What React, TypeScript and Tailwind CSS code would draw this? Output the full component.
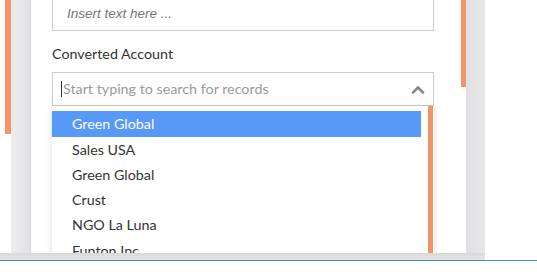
import { ChevronUp } from "lucide-react";

const records = ["Green Global", "Sales USA", "Green Global", "Crust", "NGO La Luna", "Funton Inc"];

export default function App() {
  return (
    <div className="w-[537px] h-[276px] bg-white flex flex-col overflow-hidden font-['Lato','Open_Sans',sans-serif]">
      <div className="flex h-[260px]">
        <div className="w-[485px] flex flex-col">
          <div className="flex flex-1 min-h-0">
            {/* page scrollbar */}
            <div className="w-[11px] bg-white pl-[5px]">
              <div className="w-[6px] h-[134px] bg-[#f4936a]" />
            </div>
            <div className="w-[20px] bg-gradient-to-r from-[#ececee] to-[#e2e2e4]" />

            {/* modal panel */}
            <div className="w-[435px] bg-white rounded-bl-[4px] flex overflow-hidden shadow-[0_1px_3px_rgba(0,0,0,0.12)]">
              <div className="flex-1 pl-[21px] pr-[27px] relative">
                <div className="mt-[-13px] h-[44px] border border-[#cccccc] px-[14px] pt-[12px]">
                  <span className="text-[13.5px] italic text-[#757575] font-['Liberation_Sans',Arial,sans-serif]">
                    Insert text here ...
                  </span>
                </div>

                <div className="mt-[14px] text-[14.3px] text-[#333] leading-[18px]">Converted Account</div>

                <div className="relative mt-[9px]">
                  <div className="h-[34px] border border-[#cccccc] flex items-center pl-[8px] pr-[5px]">
                    <div className="w-px h-[16px] bg-[#333]" />
                    <span className="text-[14.3px] text-[#9a9a9a] ml-[1px] flex-1">Start typing to search for records</span>
                    <ChevronUp size={20} strokeWidth={3.2} className="text-[#8a8a8a] mt-[1px]" />
                  </div>

                  {/* results dropdown */}
                  <div className="absolute left-0 top-[34px] w-[382px] h-[160px] bg-white flex pt-[5px] shadow-[0_2px_6px_rgba(0,0,0,0.15)]">
                    <div className="w-[369px]">
                      {records.map((r, i) => (
                        <div
                          key={i}
                          className={
                            i === 0
                              ? "h-[26px] pl-[20px] flex items-center text-[14.3px] bg-[#5898f8] text-white"
                              : "h-[25.2px] pl-[20px] flex items-center text-[14.3px] text-[#333]"
                          }
                        >
                          {r}
                        </div>
                      ))}
                    </div>
                    <div className="ml-[7px] w-[5px] h-[200px] mt-[-5px] bg-[#f4936a]" />
                  </div>
                </div>
              </div>
              <div className="w-[5px] h-[87px] bg-[#f4936a]" />
            </div>

            <div className="w-[19px] bg-gradient-to-r from-[#e0e0e2] to-[#e8e8ea]" />
          </div>
          <div className="h-[7px] bg-gradient-to-b from-[#d8d8d8] to-[#e6e6e8]" />
        </div>
        <div className="flex-1 bg-white" />
      </div>
      <div className="h-px bg-[#4a8aa0]" />
    </div>
  );
}
